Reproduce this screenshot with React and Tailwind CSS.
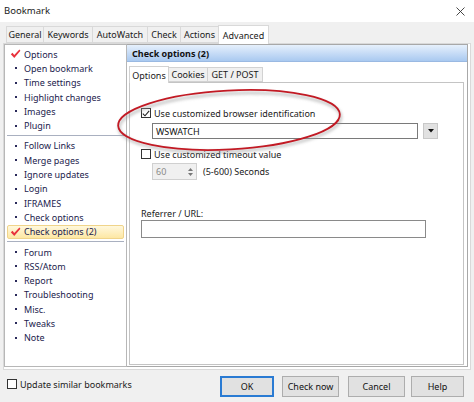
import React from 'react';

const groups = [
  [
    { label: 'Options', check: true },
    { label: 'Open bookmark' },
    { label: 'Time settings' },
    { label: 'Highlight changes' },
    { label: 'Images' },
    { label: 'Plugin' },
  ],
  [
    { label: 'Follow Links' },
    { label: 'Merge pages' },
    { label: 'Ignore updates' },
    { label: 'Login' },
    { label: 'IFRAMES' },
    { label: 'Check options' },
    { label: 'Check options (2)', check: true, active: true },
  ],
  [
    { label: 'Forum' },
    { label: 'RSS/Atom' },
    { label: 'Report' },
    { label: 'Troubleshooting' },
    { label: 'Misc.' },
    { label: 'Tweaks' },
    { label: 'Note' },
  ],
];

const tabs = [
  { label: 'General', w: 'w-[37px]' },
  { label: 'Keywords', w: 'w-[49px]' },
  { label: 'AutoWatch', w: 'w-[55px]' },
  { label: 'Check', w: 'w-[33px]' },
  { label: 'Actions', w: 'w-[38px]' },
  { label: 'Advanced', w: 'w-[51px]', active: true },
];

// heavy red tick used for the active pages
const RedCheck = () => (
  <svg width="11" height="10" viewBox="0 0 11 10" className="shrink-0">
    <path d="M0.8 5.2 L2.6 3.8 L4.2 6 L9.4 0.6 L10.4 1.8 L4.3 9 Z" fill="#e8323c" />
  </svg>
);

const Checkbox = ({ checked }) => (
  <div className="w-[10px] h-[10px] border border-[#333] bg-white flex items-center justify-center shrink-0">
    {checked && (
      <svg width="8" height="7" viewBox="0 0 8 7">
        <path d="M0.8 3.6 L3 5.8 L7.2 0.8" fill="none" stroke="#222" strokeWidth="1.1" />
      </svg>
    )}
  </div>
);

const ListItem = ({ item }) => (
  <div
    className={
      'h-[14.3px] flex items-center mx-[2px] ' +
      (item.active
        ? 'bg-gradient-to-b from-[#fff8dd] to-[#fde7a3] border border-[#f0d48a] rounded-[2px]'
        : 'border border-transparent')
    }
  >
    <div className="w-[14px] pl-[1px] flex items-center justify-center shrink-0">
      {item.check ? <RedCheck /> : <div className="w-[2px] h-[2px] bg-[#2a2a5a]" />}
    </div>
    <span className="ml-[2px] text-[#1b1b4d] whitespace-nowrap">{item.label}</span>
  </div>
);

const Button = ({ children, w, focus, className = '' }) => (
  <div
    className={
      'h-[21px] flex items-center justify-center bg-[#e1e1e1] text-[#111] ' +
      (focus ? 'border-2 border-[#2a7bd3] ' : 'border border-[#adadad] ') +
      w +
      ' ' +
      className
    }
  >
    {children}
  </div>
);

export default function App() {
  return (
    <div className="relative w-[474px] h-[402px] overflow-hidden bg-[#f0f0f0] font-['Noto_Sans',sans-serif] text-[9px] leading-none text-[#1a1a1a]">
      {/* Title bar */}
      <div className="h-[22px] bg-white flex items-center justify-between pl-[4px] pr-[9px]">
        <span className="text-[9.5px] text-[#1a1a1a]">Bookmark</span>
        <svg width="9" height="9" viewBox="0 0 9 9">
          <path d="M0.5 0.5 L8.5 8.5 M8.5 0.5 L0.5 8.5" stroke="#333" strokeWidth="0.9" />
        </svg>
      </div>

      {/* Tabs */}
      <div className="h-[21px] flex items-end pl-[6px]">
        {tabs.map((t) =>
          t.active ? (
            <div
              key={t.label}
              className={'h-[19px] -mb-px bg-white border border-b-0 border-[#d9d9d9] flex items-center justify-center relative z-10 ' + t.w}
            >
              {t.label}
            </div>
          ) : (
            <div
              key={t.label}
              className={'h-[17px] bg-[#f0f0f0] border border-[#d9d9d9] border-r-0 flex items-center justify-center ' + t.w}
            >
              {t.label}
            </div>
          )
        )}
      </div>

      {/* Tab page */}
      <div className="mx-[3px] h-[327px] bg-white border border-[#d9d9d9] flex pb-[2px]">
        {/* Left list */}
        <div className="w-[123px] border border-[#b7b7b7] bg-white pt-[2px]">
          {groups.map((g, gi) => (
            <div key={gi}>
              {gi > 0 && (
                <div className="h-[6px] flex items-center px-[2px]">
                  <div className="h-px w-full bg-[#a9b0c0]" />
                </div>
              )}
              {g.map((it) => (
                <ListItem key={it.label} item={it} />
              ))}
            </div>
          ))}
        </div>

        {/* Right panel */}
        <div className="flex-1 border border-[#a8a8a8] border-l-0 flex flex-col mr-[2px]">
          <div className="h-[17px] bg-gradient-to-b from-[#e6f0fc] to-[#a9c9f0] border-b border-[#9ab9e2] flex items-center pl-[5px] font-bold text-[#111]">
            Check options (2)
          </div>
          <div className="h-[20px] flex items-end pl-[2px]">
            <div className="w-[40px] h-[17px] -mb-px bg-white border border-b-0 border-[#d2d2d2] flex items-center justify-center relative z-10">
              Options
            </div>
            <div className="w-[39px] h-[15px] bg-[#f0f0f0] border border-[#d2d2d2] border-l-0 flex items-center justify-center">
              Cookies
            </div>
            <div className="w-[55px] h-[15px] bg-[#f0f0f0] border border-[#d2d2d2] border-l-0 flex items-center justify-center">
              GET / POST
            </div>
          </div>
          <div className="flex-1 ml-[2px] mr-[3px] mb-[1px] border border-[#c4c4c4] bg-white pl-[11px] pt-[25px]">
            <div className="flex items-center h-[10px]">
              <Checkbox checked />
              <span className="ml-[3px]">Use customized browser identification</span>
            </div>
            <div className="flex mt-[5px] ml-[11px]">
              <div className="w-[266px] h-[16px] border border-[#7a7a7a] flex items-center pl-[3px] text-[#111]">
                WSWATCH
              </div>
              <div className="ml-[5px] w-[15px] h-[16px] bg-[#e1e1e1] border border-[#c8c8c8] flex items-center justify-center">
                <svg width="6" height="4" viewBox="0 0 6 4">
                  <path d="M0 0 H6 L3 3.5 Z" fill="#111" />
                </svg>
              </div>
            </div>
            <div className="flex items-center h-[10px] mt-[10px]">
              <Checkbox />
              <span className="ml-[3px]">Use customized timeout value</span>
            </div>
            <div className="flex items-center mt-[4px] ml-[11px]">
              <div className="w-[45px] h-[17px] bg-[#f0f0f0] border border-[#d0d0d0] flex items-center">
                <span className="pl-[3px] flex-1 text-[#8a8a8a]">60</span>
                <div className="w-[9px] h-full flex flex-col items-center justify-center gap-[2px] mr-[1px]">
                  <svg width="5" height="3" viewBox="0 0 5 3">
                    <path d="M0 3 H5 L2.5 0 Z" fill="#777" />
                  </svg>
                  <svg width="5" height="3" viewBox="0 0 5 3">
                    <path d="M0 0 H5 L2.5 3 Z" fill="#777" />
                  </svg>
                </div>
              </div>
              <span className="ml-[6px]">(5-600) Seconds</span>
            </div>
            <div className="mt-[27px] h-[12px] flex items-center">Referrer / URL:</div>
            <div className="mt-[1px] w-[285px] h-[18px] border border-[#8a8a8a]" />
          </div>
        </div>
      </div>

      {/* Bottom row */}
      <div className="flex items-start">
        <div className="flex items-center h-[10px] mt-[9px] ml-[7px]">
          <Checkbox />
          <span className="ml-[3px]">Update similar bookmarks</span>
        </div>
        <div className="flex mt-[6px] ml-auto mr-[10px]">
          <Button w="w-[54px]" focus>OK</Button>
          <Button w="w-[57px]" className="ml-[8px]">Check now</Button>
          <Button w="w-[57px]" className="ml-[9px]">Cancel</Button>
          <Button w="w-[53px]" className="ml-[6px]">Help</Button>
        </div>
      </div>

      {/* Red annotation ellipse */}
      <svg className="absolute left-0 top-0 pointer-events-none" width="474" height="402" viewBox="0 0 474 402">
        <defs>
          <filter id="blur" x="-20%" y="-50%" width="140%" height="200%">
            <feGaussianBlur stdDeviation="1.5" />
          </filter>
        </defs>
        <ellipse cx="230" cy="122.5" rx="111" ry="29" transform="rotate(-3 230 122)" fill="none" stroke="#999" strokeWidth="2.5" opacity="0.6" filter="url(#blur)" />
        <ellipse cx="229" cy="120" rx="111" ry="29.5" transform="rotate(-3 229 120)" fill="none" stroke="#c21a24" strokeWidth="1.8" />
      </svg>
    </div>
  );
}
